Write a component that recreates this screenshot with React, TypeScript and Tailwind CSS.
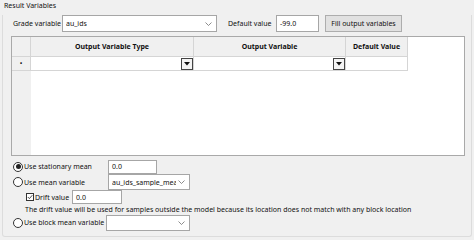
import React from 'react'

const Chevron = () => (
  <svg width="7" height="4" viewBox="0 0 7 4" className="shrink-0">
    <path d="M0.5 0.5 L3.5 3.5 L6.5 0.5" fill="none" stroke="#707070" strokeWidth="0.8" />
  </svg>
)

const ComboBox = ({ value, className }: { value: string; className: string }) => (
  <div className={`flex items-center justify-between bg-white border border-[#a6a6a6] pl-[3px] pr-[4px] gap-[2px] ${className}`}>
    <span className="overflow-hidden text-clip">{value}</span>
    <Chevron />
  </div>
)

const TextBox = ({ value, className }: { value: string; className: string }) => (
  <div className={`flex items-center bg-white border border-[#a6a6a6] pl-[3px] ${className}`}>{value}</div>
)

const Radio = ({ checked }: { checked?: boolean }) => (
  <div className="w-[10px] h-[10px] rounded-full border border-[#333] bg-white flex items-center justify-center shrink-0">
    {checked && <div className="w-[5px] h-[5px] rounded-full bg-[#222]" />}
  </div>
)

const DropButton = () => (
  <div className="w-[12px] h-[12px] border border-[#444] bg-[#f4f4f4] flex items-center justify-center shrink-0">
    <svg width="6" height="4" viewBox="0 0 6 4">
      <path d="M0 0 L6 0 L3 3.5 Z" fill="#111" />
    </svg>
  </div>
)

export default function App() {
  return (
    <div className="w-[474px] h-[240px] bg-[#f0f0f0] overflow-hidden whitespace-nowrap text-[7px] leading-none text-[#111] font-['Noto_Sans','Open_Sans',sans-serif]">
      <div className="pl-[4px] h-[11px] flex items-center">Result Variables</div>

      <div className="mx-[2px] h-[222px] border-x border-b border-[#dcdcdc] rounded-b-[3px]">
        {/* grade variable row */}
        <div className="flex items-center h-[17px] mt-[4px] pl-[10px]">
          <span className="w-[49px]">Grade variable</span>
          <ComboBox value="au_ids" className="w-[155px] h-[17px]" />
          <span className="ml-[11px] w-[48px]">Default value</span>
          <TextBox value="-99.0" className="w-[43px] h-[17px]" />
          <div className="ml-[6px] w-[77px] h-[17px] bg-[#e1e1e1] border border-[#adadad] flex items-center justify-center">
            Fill output variables
          </div>
        </div>

        {/* table */}
        <div className="ml-[8px] mt-[4px] w-[454px] h-[120px] border border-[#a9a9a9] bg-white flex flex-col">
          <div className="flex h-[20px] shrink-0 font-bold">
            <div className="w-[19px] bg-[#f0f0f0] border-r border-b border-[#d5d5d5]" />
            <div className="w-[163px] bg-[#f0f0f0] border-r border-b border-[#d5d5d5] flex items-center justify-center">Output Variable Type</div>
            <div className="w-[152px] bg-[#f0f0f0] border-r border-b border-[#d5d5d5] flex items-center justify-center">Output Variable</div>
            <div className="w-[62px] bg-[#f0f0f0] border-r border-b border-[#d5d5d5] flex items-center justify-center">Default Value</div>
            <div className="flex-1 bg-white" />
          </div>
          <div className="flex h-[14px] shrink-0">
            <div className="w-[19px] bg-[#f0f0f0] border-r border-b border-[#d5d5d5] flex items-center justify-center text-[7px]">•</div>
            <div className="w-[163px] border-r border-b border-[#d5d5d5] flex items-center justify-end">
              <DropButton />
            </div>
            <div className="w-[152px] border-r border-b border-[#d5d5d5] flex items-center justify-end">
              <DropButton />
            </div>
            <div className="w-[62px] border-r border-b border-[#d5d5d5]" />
            <div className="flex-1" />
          </div>
          <div className="flex flex-1">
            <div className="w-[19px] bg-[#f0f0f0]" />
            <div className="flex-1" />
          </div>
        </div>

        {/* options */}
        <div className="mt-[3px] pl-[10px] flex flex-col">
          <div className="flex items-center h-[15px]">
            <Radio checked />
            <span className="ml-[1px] w-[84px]">Use stationary mean</span>
            <TextBox value="0.0" className="w-[49px] h-[14px]" />
          </div>
          <div className="flex items-center h-[16px]">
            <Radio />
            <span className="ml-[1px] w-[84px]">Use mean variable</span>
            <ComboBox value="au_ids_sample_mean" className="w-[82px] h-[16px]" />
          </div>
          <div className="flex items-center h-[14px] pl-[13px]">
            <div className="w-[8px] h-[8px] border border-[#333] bg-white flex items-center justify-center shrink-0">
              <svg width="6" height="6" viewBox="0 0 6 6">
                <path d="M0.8 3 L2.4 4.6 L5.3 1.2" fill="none" stroke="#222" strokeWidth="0.8" />
              </svg>
            </div>
            <span className="ml-[1px] w-[37px]">Drift value</span>
            <TextBox value="0.0" className="w-[50px] h-[14px]" />
          </div>
          <div className="flex items-center h-[10px] pl-[12px]">
            The drift value will be used for samples outside the model because its location does not match with any block location
          </div>
          <div className="flex items-center h-[17px]">
            <Radio />
            <span className="ml-[1px] w-[82px]">Use block mean variable</span>
            <ComboBox value="" className="w-[84px] h-[16px]" />
          </div>
        </div>
      </div>
    </div>
  )
}
